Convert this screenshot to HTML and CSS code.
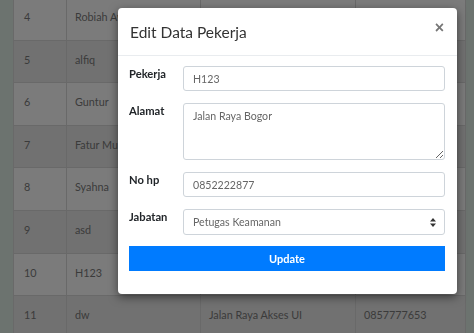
FILE: index.html
```html
<!DOCTYPE html>
<html lang="id">

<head>
    <meta charset="UTF-8">
    <title>Data Pekerja</title>
    <link rel="stylesheet" href="styles.css">
</head>

<body>

    <div class="page">
        <table class="data-table">
            <colgroup>
                <col class="col-no">
                <col class="col-nama">
                <col class="col-alamat">
                <col class="col-hp">
            </colgroup>
            <tr><td>4</td><td>Robiah Awaliyah</td><td>Jalan Raya Depok</td><td>0852111234</td></tr>
            <tr><td>5</td><td>alfiq</td><td>Jalan Margonda</td><td>0856123456</td></tr>
            <tr><td>6</td><td>Guntur</td><td>Jalan Raya Bogor</td><td>0857123123</td></tr>
            <tr><td>7</td><td>Fatur Muhammad</td><td>Jalan Juanda</td><td>0858765432</td></tr>
            <tr><td>8</td><td>Syahna</td><td>Jalan Kelapa Dua</td><td>0812345678</td></tr>
            <tr><td>9</td><td>asd</td><td>asd</td><td>0811111111</td></tr>
            <tr><td>10</td><td>H123</td><td>Jalan Raya Bogor</td><td>0852222877</td></tr>
            <tr><td>11</td><td>dw</td><td>Jalan Raya Akses UI</td><td>0857777653</td></tr>
        </table>
    </div>

    <div class="backdrop"></div>

    <div class="modal-dialog">
        <div class="modal-header">
            <div class="modal-title">Edit Data Pekerja</div>
            <span class="close">&times;</span>
        </div>

        <div class="modal-body">
            <div class="form-row">
                <div class="label">Pekerja</div>
                <input type="text" class="form-control" value="H123">
            </div>

            <div class="form-row">
                <div class="label">Alamat</div>
                <textarea class="form-control textarea">Jalan Raya Bogor</textarea>
            </div>

            <div class="form-row">
                <div class="label">No hp</div>
                <input type="text" class="form-control" value="0852222877">
            </div>

            <div class="form-row">
                <div class="label">Jabatan</div>
                <div class="select-wrap">
                    <select class="form-control select">
                        <option>Petugas Keamanan</option>
                        <option>Petugas Kebersihan</option>
                    </select>
                    <svg class="select-arrow" width="6" height="9" viewBox="0 0 6 9">
                        <path d="M3 0 L6 3.5 L0 3.5 Z M3 9 L6 5.5 L0 5.5 Z" fill="#333" />
                    </svg>
                </div>
            </div>

            <button class="btn-update">Update</button>
        </div>
    </div>

</body>

</html>
```

FILE: styles.css
```css
body {
    font-family: Lato, "Open Sans", sans-serif;
    margin: 0;
    background: #d8e6df;
    overflow: hidden;
}

.page {
    padding-left: 13px;
    margin-top: -3px;
}

.data-table {
    width: 453px;
    table-layout: fixed;
    border-collapse: collapse;
    background: #fff;
    font-size: 10.8px;
    color: #777;
}

.col-no {
    width: 53px;
}

.col-nama {
    width: 134px;
}

.col-alamat {
    width: 155px;
}

.data-table tr:nth-child(odd) {
    background: #f6f6f6;
}

.data-table tr:nth-child(even) {
    background: #e2e2e2;
}

.data-table td {
    border: 1px solid #d2d2d2;
    padding: 11px 8px 14.6px;
    line-height: 16px;
    white-space: nowrap;
    overflow: hidden;
    vertical-align: top;
}

.data-table td:first-child {
    padding-left: 10px;
}

.backdrop {
    position: fixed;
    inset: 0;
    background: rgba(0, 0, 0, 0.5);
}

.modal-dialog {
    position: absolute;
    left: 118px;
    top: 8px;
    width: 339px;
    background: #fff;
    border-radius: 4px;
    box-shadow: 0 3px 10px rgba(0, 0, 0, 0.5);
}

.modal-header {
    height: 47px;
    border-bottom: 1px solid #e9ecef;
    padding: 0 13px 0 12px;
    display: flex;
    align-items: center;
    justify-content: space-between;
}

.modal-title {
    font-size: 15.5px;
    color: #333;
}

.close {
    margin-top: -7px;
    font-family: Arial, sans-serif;
    font-size: 16px;
    font-weight: bold;
    color: #777;
    cursor: pointer;
}

.modal-body {
    padding: 10px 12px 23px 11px;
}

.form-row {
    display: flex;
    margin-bottom: 12px;
}

.label {
    width: 54px;
    flex-shrink: 0;
    font-size: 11.2px;
    font-weight: bold;
    color: #212529;
    line-height: 16px;
}

.form-control {
    flex: 1;
    box-sizing: border-box;
    height: 25px;
    border: 1px solid #ced4da;
    border-radius: 3px;
    padding: 0 9px;
    font-family: Lato, "Open Sans", sans-serif;
    font-size: 10.6px;
    color: #666;
    background: #fff;
    margin: 0;
}

.textarea {
    height: 57px;
    padding-top: 6px;
    resize: vertical;
}

.select-wrap {
    flex: 1;
    display: flex;
    position: relative;
}

.select {
    height: 26px;
    appearance: none;
    -webkit-appearance: none;
}

.select-arrow {
    position: absolute;
    right: 9px;
    top: 9px;
}

.btn-update {
    width: 100%;
    height: 25px;
    border: none;
    border-radius: 0;
    background: #007bff;
    color: #fff;
    font-family: Lato, "Open Sans", sans-serif;
    font-weight: bold;
    font-size: 11px;
    cursor: pointer;
    margin-top: -1px;
}
```
